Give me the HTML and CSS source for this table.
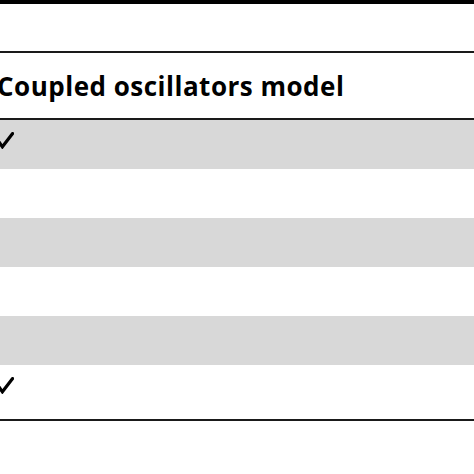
FILE: index.html
```html
<!DOCTYPE html>
<html>
<head>
<meta charset="utf-8">
<link rel="stylesheet" href="styles.css">
</head>
<body>
<div class="topbar"></div>
<div class="gap"></div>
<table class="grid">
  <thead>
    <tr><th>Coupled oscillators model</th></tr>
  </thead>
  <tbody>
    <tr class="shade"><td class="mark"><svg class="check" width="14" height="17" viewBox="0 0 14 17" aria-label="✓"><path d="M-1 10 L2.4 14.8 L12.6 1.6" fill="none" stroke="#000" stroke-width="3.2" stroke-linecap="round" stroke-linejoin="miter"/></svg></td></tr>
    <tr><td></td></tr>
    <tr class="shade"><td></td></tr>
    <tr><td></td></tr>
    <tr class="shade"><td></td></tr>
    <tr class="last"><td class="mark"><svg class="check" width="14" height="17" viewBox="0 0 14 17" aria-label="✓"><path d="M-1 10 L2.4 14.8 L12.6 1.6" fill="none" stroke="#000" stroke-width="3.2" stroke-linecap="round" stroke-linejoin="miter"/></svg></td></tr>
  </tbody>
</table>
</body>
</html>
```
FILE: styles.css
```css
html, body {
  margin: 0;
  padding: 0;
  background: #ffffff;
}
.topbar {
  height: 4px;
  background: #000000;
}
.gap {
  height: 47px;
}
.grid {
  width: 100%;
  border-collapse: collapse;
  font-family: "Open Sans", "Noto Sans", sans-serif;
}
.grid thead tr {
  border-top: 2px solid #1a1a1a;
  border-bottom: 2px solid #1a1a1a;
}
.grid th {
  height: 65px;
  padding: 0;
  text-align: left;
  font-size: 26px;
  font-weight: 700;
  letter-spacing: 0.5px;
  color: #000;
  text-indent: -3px;
  vertical-align: middle;
  white-space: nowrap;
}
.grid td {
  height: 49px;
  padding: 0;
  vertical-align: middle;
}
.grid td.mark {
  vertical-align: top;
  padding-top: 12px;
  height: 37px;
}
.grid tr.shade td {
  background: #d8d8d8;
}
.grid tr.last {
  border-bottom: 2px solid #1a1a1a;
}
.grid tr.last td.mark {
  height: 42px;
}
.check {
  display: block;
}
```
